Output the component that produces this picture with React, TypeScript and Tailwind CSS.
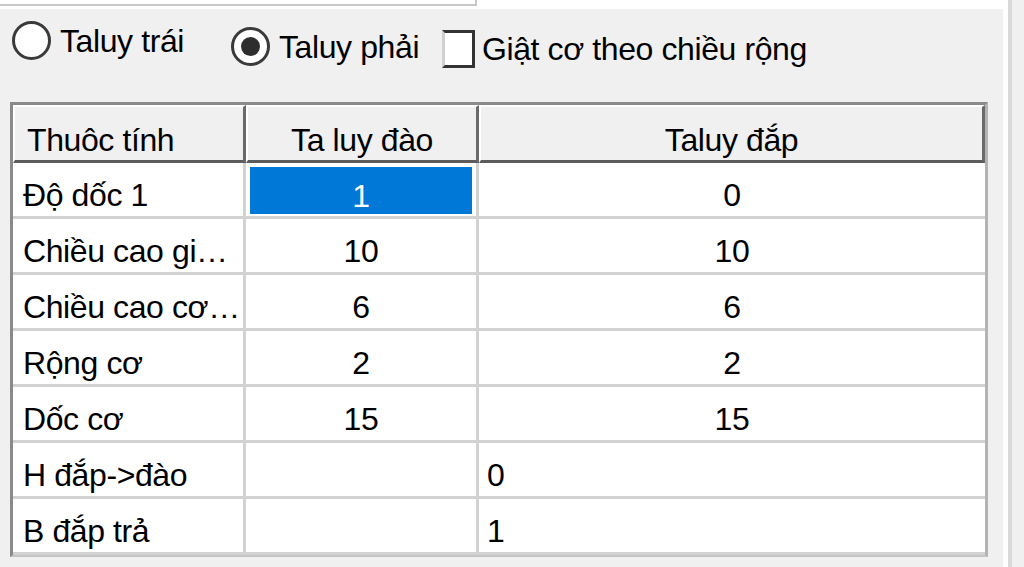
import React from "react";

type Row = { label: string; a: string; b: string; merged?: boolean; selected?: boolean };

const rows: Row[] = [
  { label: "Độ dốc 1", a: "1", b: "0", selected: true },
  { label: "Chiều cao gi…", a: "10", b: "10" },
  { label: "Chiều cao cơ…", a: "6", b: "6" },
  { label: "Rộng cơ", a: "2", b: "2" },
  { label: "Dốc cơ", a: "15", b: "15" },
  { label: "H đắp->đào", a: "", b: "0", merged: true },
  { label: "B đắp trả", a: "", b: "1", merged: true },
];

function Radio({ checked }: { checked?: boolean }) {
  return (
    <span className="flex h-[39px] w-[39px] shrink-0 items-center justify-center rounded-full border-[3px] border-[#3a3a3a] bg-white">
      {checked ? <span className="h-[19px] w-[19px] rounded-full bg-[#2e2e2e]" /> : null}
    </span>
  );
}

export default function App() {
  return (
    <div className="flex h-[567px] w-[1024px] overflow-hidden bg-white font-['Liberation_Sans',Arial,sans-serif] text-[32px] leading-none tracking-[-0.4px] text-black">
      <div className="flex w-[1003px] flex-col">
        <div className="h-[9px] shrink-0 bg-white">
          <div className="h-[6px] w-[477px] border-b-2 border-r-2 border-b-[#c8c8c8] border-r-[#c8c8c8] bg-white" />
        </div>
        <div className="flex flex-1 flex-col bg-[#f0f0f0]">
          <div className="flex h-[93px] shrink-0 items-start">
            <div className="ml-[12px] mt-[12px] flex items-center gap-[9px]">
              <Radio />
              <span className="w-[125px] whitespace-nowrap">Taluy trái</span>
            </div>
            <div className="ml-[46px] mt-[18px] flex items-center gap-[9px]">
              <Radio checked />
              <span className="w-[143px] whitespace-nowrap">Taluy phải</span>
            </div>
            <div className="ml-[20px] mt-[21px] flex items-center gap-[7px]">
              <span className="h-[38px] w-[33px] shrink-0 border-[3px] border-[#333] border-l-[#d0d0d0] bg-white" />
              <span className="w-[327px] whitespace-nowrap">Giật cơ theo chiều rộng</span>
            </div>
          </div>

          <div className="ml-[10px] flex w-[978px] flex-col border-x-[3px] border-t-[3px] border-b-2 border-t-[#8a8a8a] border-l-[#8a8a8a] border-r-[#b4b4b4] border-b-[#c4c4c4] bg-white">
            <div className="flex h-[58px] shrink-0">
              <div className="flex w-[233px] items-start border-t-2 border-l-2 border-r-[3px] border-b-[3px] border-t-white border-l-white border-r-[#6a6a6a] border-b-[#5c5c5c] bg-[#f0f0f0] pl-[12px] pt-[17px]">
                Thuôc tính
              </div>
              <div className="flex w-[233px] items-start justify-center border-t-2 border-l-2 border-r-[3px] border-b-[3px] border-t-white border-l-white border-r-[#6a6a6a] border-b-[#5c5c5c] bg-[#f0f0f0] pt-[17px]">
                Ta luy đào
              </div>
              <div className="flex flex-1 items-start justify-center border-t-2 border-l-2 border-r-[3px] border-b-[3px] border-t-white border-l-white border-r-[#6a6a6a] border-b-[#5c5c5c] bg-[#f0f0f0] pt-[17px]">
                Taluy đắp
              </div>
            </div>
            {rows.map((r, i) => (
              <div key={i} className="flex h-[56px] shrink-0 border-b-[3px] border-b-[#d2d2d2]">
                <div className="flex w-[233px] items-center whitespace-nowrap border-r-[3px] border-r-[#d2d2d2] pl-[10px] pt-[10px]">
                  {r.label}
                </div>
                {r.selected ? (
                  <div className="flex w-[233px] border-r-[3px] border-r-[#d2d2d2] px-[4px] pb-[2px] pt-[4px]">
                    <div className="flex flex-1 items-center justify-center bg-[#0078d7] pt-[11px] text-white">
                      {r.a}
                    </div>
                  </div>
                ) : (
                  <div className="flex w-[233px] items-center justify-center border-r-[3px] border-r-[#d2d2d2] pt-[10px]">
                    {r.a}
                  </div>
                )}
                {r.merged ? (
                  <div className="flex flex-1 items-center pl-[8px] pt-[10px]">{r.b}</div>
                ) : (
                  <div className="flex flex-1 items-center justify-center pt-[10px]">{r.b}</div>
                )}
              </div>
            ))}
          </div>
        </div>
      </div>
      <div className="w-[5px] bg-white" />
      <div className="w-[4px] bg-[#d9d9d9]" />
      <div className="flex-1 bg-[#f0f0f0]" />
    </div>
  );
}
